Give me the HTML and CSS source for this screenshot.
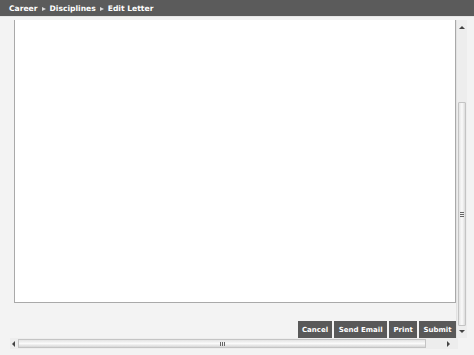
FILE: index.html
```html
<!DOCTYPE html>
<html>
<head>
<meta charset="utf-8">
<link rel="stylesheet" href="styles.css">
</head>
<body>
<div class="crumbs">
  <span class="crumb">Career</span><span class="sep"></span><span class="crumb">Disciplines</span><span class="sep"></span><span class="crumb">Edit Letter</span>
</div>
<div class="frame">
  <div class="pane">
    <div class="editor"></div>
    <div class="actions">
      <button class="btn">Cancel</button>
      <button class="btn">Send Email</button>
      <button class="btn">Print</button>
      <button class="btn">Submit</button>
    </div>
  </div>
  <div class="vscroll">
    <div class="arrow-up"></div>
    <div class="vtrack"><div class="vthumb"><span class="grip"></span></div></div>
    <div class="arrow-down"></div>
  </div>
  <div class="hscroll">
    <div class="arrow-left"></div>
    <div class="hthumb"><span class="hgrip"></span></div>
    <div class="arrow-right"></div>
  </div>
</div>
</body>
</html>
```
FILE: styles.css
```css
html, body {
  margin: 0;
  padding: 0;
  background: #f3f3f3;
  width: 474px;
  height: 355px;
  overflow: hidden;
  font-family: "DejaVu Sans", Verdana, sans-serif;
}
.crumbs {
  height: 16px;
  background: #5b5b5b;
  display: flex;
  align-items: center;
  padding-left: 9px;
  color: #fff;
  font-size: 7.6px;
  font-weight: bold;
  border-bottom: 1px solid #e6e6e6;
}
.sep {
  width: 0;
  height: 0;
  border-left: 4px solid #d8d8d8;
  border-top: 2.5px solid transparent;
  border-bottom: 2.5px solid transparent;
  margin: 1px 4px 0 4px;
}
.frame {
  display: grid;
  grid-template-columns: 14px 442px 11px 1fr;
  grid-template-rows: 3px 318px 11px 1fr;
}
.pane {
  grid-column: 2;
  grid-row: 2;
  display: flex;
  flex-direction: column;
}
.editor {
  height: 283px;
  background: #fff;
  border: 1px solid #a9a9a9;
  border-top: none;
  box-sizing: border-box;
}
.actions {
  margin-top: auto;
  display: flex;
  justify-content: flex-end;
  gap: 2px;
}
.btn {
  height: 17px;
  padding: 0 4.4px;
  border: none;
  background: #595959;
  color: #fff;
  font-family: "DejaVu Sans", Verdana, sans-serif;
  font-weight: bold;
  font-size: 7px;
}
.vscroll {
  grid-column: 3;
  grid-row: 2;
  background: #ededed;
  border-left: 1px solid #e2e2e2;
  display: flex;
  flex-direction: column;
  align-items: center;
}
.arrow-up {
  margin-top: 6px;
  width: 0; height: 0;
  border-bottom: 3px solid #444;
  border-left: 3px solid transparent;
  border-right: 3px solid transparent;
}
.vtrack {
  flex: 1;
  width: 100%;
  display: flex;
  flex-direction: column;
  justify-content: flex-end;
  padding-bottom: 4px;
}
.vthumb {
  height: 222px;
  margin: 0 1px;
  background: linear-gradient(to right, #e4e4e4, #fafafa 50%, #dcdcdc);
  border: 1px solid #c4c4c4;
  border-radius: 1px;
  display: flex;
  align-items: center;
  justify-content: center;
}
.grip {
  width: 4px;
  height: 5px;
  background: repeating-linear-gradient(to bottom, #666 0 1px, transparent 1px 2px);
}
.arrow-down {
  margin-bottom: 5px;
  width: 0; height: 0;
  border-top: 3px solid #444;
  border-left: 3px solid transparent;
  border-right: 3px solid transparent;
}
.hscroll {
  grid-column: 1 / 4;
  grid-row: 3;
  margin-left: 10px;
  margin-right: 9px;
  background: #ededed;
  display: flex;
  align-items: center;
  gap: 3px;
}
.arrow-left {
  margin-left: 2px;
  width: 0; height: 0;
  border-right: 3px solid #444;
  border-top: 3px solid transparent;
  border-bottom: 3px solid transparent;
}
.hthumb {
  width: 406px;
  height: 7px;
  background: linear-gradient(to bottom, #e4e4e4, #fafafa 50%, #d6d6d6);
  border: 1px solid #c4c4c4;
  display: flex;
  align-items: center;
  justify-content: center;
}
.hgrip {
  width: 5px;
  height: 4px;
  background: repeating-linear-gradient(to right, #666 0 1px, transparent 1px 2px);
}
.arrow-right {
  margin-left: auto;
  margin-right: 8px;
  width: 0; height: 0;
  border-left: 3px solid #444;
  border-top: 3px solid transparent;
  border-bottom: 3px solid transparent;
}
```
